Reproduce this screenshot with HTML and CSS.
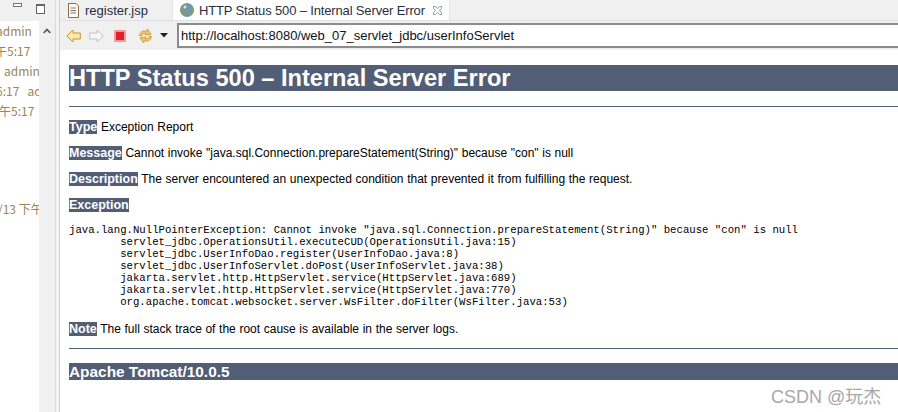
FILE: index.html
```html
<!DOCTYPE html>
<html lang="en">
<head>
<meta charset="utf-8">
<title>HTTP Status 500</title>
<link rel="stylesheet" href="styles.css">
</head>
<body>
<div class="shell">
  <div class="left">
    <div class="winbar">
      <span class="win-min"></span>
      <span class="win-max"></span>
    </div>
    <div class="leftbody">
      <aside class="side">
        <div class="log r1">admin</div>
        <div class="log r2">午5:17</div>
        <div class="log r3">admin</div>
        <div class="log r4">6:17&nbsp;&nbsp;&nbsp;admin</div>
        <div class="log r5">午5:17</div>
        <div class="log r6">/13 下午</div>
      </aside>
      <div class="track">
        <svg class="caret" width="8" height="6" viewBox="0 0 8 6"><path d="M.7 5 L4 1.500 L7.300 5" fill="none" stroke="#555" stroke-width="1.700"/></svg>
      </div>
    </div>
  </div>
  <div class="sash"></div>
  <main class="editor">
    <div class="tabs">
      <div class="tab">
        <svg width="13" height="15" viewBox="0 0 13 15"><path d="M1.500 .5H9L11.500 3V14.500H1.500Z" fill="#fff" stroke="#8a6d3b"/><path d="M3.500 5H9" stroke="#3a9a5a"/><path d="M3.500 7.500H9" stroke="#d2504a"/><path d="M3.500 10H9" stroke="#3f7fc0"/></svg>
        <span>register.jsp</span>
      </div>
      <div class="tab active">
        <svg width="16" height="16" viewBox="0 0 16 16"><circle cx="8" cy="8" r="7" fill="#6d97b8"/><path d="M3 3.500C6 2 8 3 8 5C8 7 5 6.500 5 9C5 11 7 11 7 14C4 13.500 1.500 11 1.500 8C1.500 6 2 4.500 3 3.500Z" fill="#8c9a5e"/><path d="M10 7L14.500 6.500C15 9 14 12 11.500 13.500C10.500 11 9.500 9 10 7Z" fill="#8c9a5e"/><circle cx="6" cy="5" r="1.500" fill="#d9e5ee"/></svg>
        <span class="tabtitle">HTTP Status 500 – Internal Server Error</span>
        <svg class="close" width="11" height="11" viewBox="0 0 11 11"><path d="M1.500 1.500H3.500L5.500 3.500L7.500 1.500H9.500V3.500L7.500 5.500L9.500 7.500V9.500H7.500L5.500 7.500L3.500 9.500H1.500V7.500L3.500 5.500L1.500 3.500Z" fill="#fff" stroke="#8f9a9a"/></svg>
      </div>
      <div class="tabfill"></div>
    </div>
    <div class="toolbar">
      <svg class="back" width="15" height="14" viewBox="0 0 15 14"><path d="M.8 7L7 1V4H14.300V10H7V13Z" fill="#fbe9a8" stroke="#c8922c"/></svg>
      <svg class="fwd" width="15" height="14" viewBox="0 0 15 14"><path d="M14.200 7L8 1V4H.7V10H8V13Z" fill="#f6f6f6" stroke="#c4c4c4"/></svg>
      <svg class="stop" width="12" height="12" viewBox="0 0 12 12"><rect width="12" height="12" rx="1.500" fill="#ef9a9a"/><rect x="2" y="2" width="8" height="8" fill="#e0202a"/></svg>
      <svg class="refresh" width="15" height="16" viewBox="0 0 15 16"><path d="M1.500 7.500C2 4 5 2 8.500 3.300L9.500 1L13 6.500L7 7L7.800 5.300C6 4.800 4.500 5.800 4 7.500Z" fill="#f3c469" stroke="#c8922c" stroke-width=".8"/><path d="M13.500 8.500C13 12 10 14 6.500 12.700L5.500 15L2 9.500L8 9L7.200 10.700C9 11.200 10.500 10.200 11 8.500Z" fill="#f3c469" stroke="#c8922c" stroke-width=".8"/></svg>
      <svg class="drop" width="8" height="5" viewBox="0 0 8 5"><path d="M0 0H8L4 4.500Z" fill="#222"/></svg>
      <div class="url">http://localhost:8080/web_07_servlet_jdbc/userInfoServlet</div>
    </div>
    <article class="page">
      <h1>HTTP Status 500 – Internal Server Error</h1>
      <hr class="rule">
      <p><b>Type</b> Exception Report</p>
      <p><b>Message</b> Cannot invoke "java.sql.Connection.prepareStatement(String)" because "con" is null</p>
      <p><b>Description</b> The server encountered an unexpected condition that prevented it from fulfilling the request.</p>
      <p><b>Exception</b></p>
      <pre>java.lang.NullPointerException: Cannot invoke "java.sql.Connection.prepareStatement(String)" because "con" is null
	servlet_jdbc.OperationsUtil.executeCUD(OperationsUtil.java:15)
	servlet_jdbc.UserInfoDao.register(UserInfoDao.java:8)
	servlet_jdbc.UserInfoServlet.doPost(UserInfoServlet.java:38)
	jakarta.servlet.http.HttpServlet.service(HttpServlet.java:689)
	jakarta.servlet.http.HttpServlet.service(HttpServlet.java:770)
	org.apache.tomcat.websocket.server.WsFilter.doFilter(WsFilter.java:53)</pre>
      <p><b>Note</b> The full stack trace of the root cause is available in the server logs.</p>
      <hr class="rule lower">
      <h3>Apache Tomcat/10.0.5</h3>
    </article>
  </main>
</div>
<div class="mark">CSDN @玩杰</div>
</body>
</html>
```
FILE: styles.css
```css
* { box-sizing: border-box; }
html, body { margin: 0; height: 412px; overflow: hidden; background: #fff; }
body { position: relative; font-family: "Liberation Sans", Arial, sans-serif; }
.shell { display: flex; height: 412px; }

.left { width: 55px; flex: none; display: flex; flex-direction: column; }
.winbar { height: 21px; flex: none; background: #f0f0f0; display: flex; align-items: flex-start; padding: 3px 0 0 13px; }
.win-min { width: 9px; height: 4px; background: #fff; border: 1px solid #777; }
.win-max { width: 9px; height: 10px; margin: 1px 0 0 14px; background: #fff; border: 1px solid #666; border-top-width: 2px; }
.leftbody { flex: 1; display: flex; min-height: 0; }
.side { width: 39px; flex: none; overflow: hidden; background: #fff; }
.log { font: 12px/18px "Noto Sans CJK SC", "Liberation Sans", sans-serif; color: #9c8455; white-space: nowrap; }
.r1 { margin-top: 1px; margin-left: -4px; margin-bottom: 2px; }
.r2 { margin-left: -5px; margin-bottom: 2px; }
.r3 { margin-left: 4px; margin-bottom: 2px; }
.r4 { margin-left: -4px; margin-bottom: 2px; }
.r5 { margin-left: -1px; }
.r6 { margin-top: 80px; margin-left: -2px; }

.track { width: 16px; flex: none; background: #f0f0f0; padding: 7px 0 0 4px; }
.caret { display: block; }
.sash { width: 5px; flex: none; background: #f3f3f3; border-left: 1px solid #d8d8d8; border-right: 1px solid #d0d0d0; }

.editor { flex: 1; min-width: 0; display: flex; flex-direction: column; }
.tabs { height: 21px; flex: none; display: flex; background: #f0f0f0; border-bottom: 1px solid #e0e0e0; }
.tab { display: flex; align-items: center; gap: 5px; padding: 0 0 0 7px; font: 13px "Liberation Sans", sans-serif; color: #1f2f3f; white-space: nowrap; width: 113px; flex: none; background: #f0f0f0; border-right: 1px solid #e2e2e2; }
.tab.active { width: 277px; background: #fff; gap: 4px; padding-left: 6px; }
.tabtitle { letter-spacing: -.15px; }
.close { margin-left: 3px; flex: none; }
.tab svg { flex: none; }
.toolbar { height: 29px; flex: none; display: flex; align-items: center; background: #f0f0f0; padding-left: 6px; }
.toolbar svg { flex: none; }
.back { margin-right: 8px; }
.fwd { margin-right: 10px; }
.stop { margin-right: 12px; }
.refresh { margin-right: 7px; }
.drop { margin-right: 9px; }
.url { flex: 1; height: 25px; background: #fff; border: 1px solid #8c8c8c; border-width: 2px 0 2px 2px; padding-left: 2px; font: 13px/21px "Liberation Sans", sans-serif; color: #111; white-space: nowrap; }

.page { padding: 15px 0 0 9px; font: 12px "Liberation Sans", sans-serif; color: #000; }
h1, h3, b { background: #525d76; color: #fff; font-family: "Liberation Sans", sans-serif; font-weight: 700; }
h1 { margin: 0; font-size: 23.6px; line-height: 26px; height: 26px; white-space: nowrap; }
.rule { height: 1px; border: 0; background: #525d76; margin: 15px 0 13px; }
.rule.lower { margin: 12px 0 14px; }
p { margin: 0 0 12px; line-height: 14px; white-space: nowrap; word-spacing: .3px; }
b { font-size: 12.5px; }
pre { margin: 0 0 14px; font: 10.67px/12px "Liberation Mono", monospace; tab-size: 8; }
h3 { margin: 0; font-size: 15.4px; line-height: 17px; height: 17px; }

.mark { position: absolute; left: 771px; top: 382px; font: 18px "Liberation Sans", "Noto Sans CJK SC", sans-serif; color: #a8a8a8; }
```
